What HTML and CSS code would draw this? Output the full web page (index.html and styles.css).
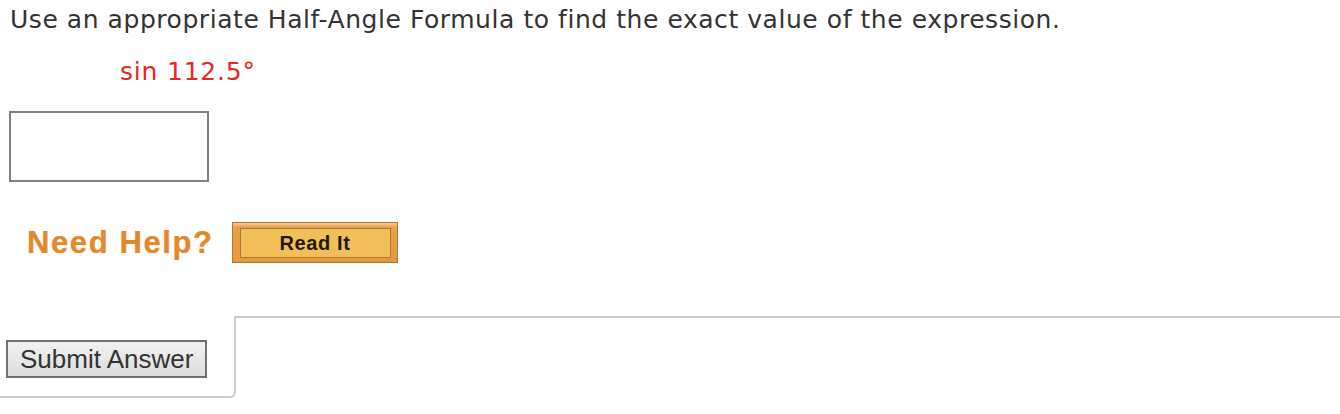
FILE: index.html
```html
<!DOCTYPE html>
<html>
<head>
<meta charset="utf-8">
<link rel="stylesheet" href="styles.css">
</head>
<body>
<div class="page">
  <p class="question">Use an appropriate Half-Angle Formula to find the exact value of the expression.</p>
  <p class="expr">sin 112.5°</p>
  <div class="answer-box"></div>
  <div class="help-row">
    <span class="need-help">Need Help?</span>
    <button class="read-it"><span class="read-it-inner">Read It</span></button>
  </div>
  <div class="submit-section">
    <div class="submit-tab">
      <button class="submit-btn">Submit Answer</button>
    </div>
    <div class="submit-rest"></div>
  </div>
</div>
</body>
</html>
```

FILE: styles.css
```css
html, body {
  margin: 0;
  padding: 0;
  background: #ffffff;
}

.page {
  width: 1340px;
  font-family: "DejaVu Sans", Verdana, sans-serif;
  color: #333333;
}

.question {
  margin: 0;
  padding: 2px 0 0 10px;
  font-size: 25px;
  line-height: 36px;
  letter-spacing: 0.55px;
}

.expr {
  margin: 16px 0 0 0;
  padding-left: 120px;
  font-size: 25px;
  line-height: 36px;
  letter-spacing: 0.8px;
  color: #e8281e;
}

.answer-box {
  margin: 21px 0 0 9px;
  width: 196px;
  height: 67px;
  border: 2px solid #808080;
  background: #ffffff;
}

.help-row {
  margin-top: 40px;
  padding-left: 27px;
  display: flex;
  align-items: center;
  gap: 18px;
  height: 41px;
}

.need-help {
  font-family: "Liberation Sans", Arial, sans-serif;
  font-weight: bold;
  font-size: 31px;
  letter-spacing: 1.6px;
  color: #e3892c;
  text-shadow: 0 0 1px rgba(227, 137, 44, 0.6);
}

.read-it {
  box-sizing: border-box;
  width: 166px;
  height: 41px;
  padding: 5px 6px 4px 7px;
  margin: 0;
  border: 1px solid #b07636;
  background: linear-gradient(#f6cfa0 0px, #eaa04a 4px, #e8973e 100%);
  display: flex;
  align-items: stretch;
  cursor: pointer;
}

.read-it-inner {
  flex: 1;
  display: flex;
  align-items: center;
  justify-content: center;
  border: 1px solid #a8793f;
  background: #f2be58;
  font-family: "Liberation Sans", Arial, sans-serif;
  font-weight: bold;
  font-size: 20px;
  letter-spacing: 0.6px;
  color: #1e1a12;
}

.submit-section {
  margin-top: 53px;
  display: flex;
}

.submit-tab {
  box-sizing: border-box;
  width: 236px;
  height: 82px;
  border-right: 2px solid #cccccc;
  border-bottom: 2px solid #cccccc;
  border-bottom-right-radius: 6px;
  padding: 24px 0 0 6px;
}

.submit-btn {
  box-sizing: border-box;
  width: 201px;
  height: 38px;
  margin: 0;
  padding: 0 0 0 12px;
  border: 2px solid #707070;
  background: linear-gradient(#f2f2f2, #dcdcdc);
  font-family: "Liberation Sans", Arial, sans-serif;
  font-size: 26px;
  color: #333333;
  text-align: left;
  cursor: pointer;
}

.submit-rest {
  flex: 1;
  margin-left: -2px;
  height: 80px;
  border-top: 2px solid #cccccc;
  border-left: 2px solid transparent;
  border-top-left-radius: 3px;
}
```
